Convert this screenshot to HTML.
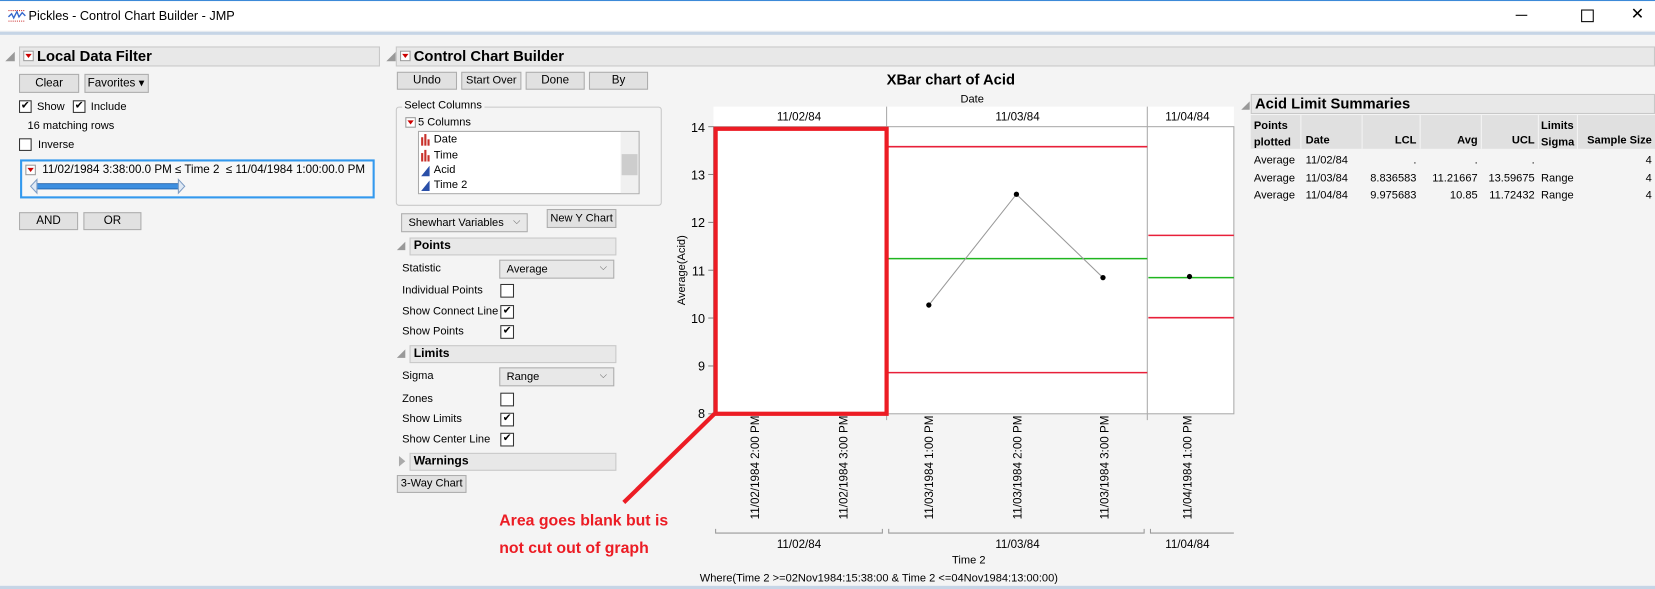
<!DOCTYPE html>
<html><head><meta charset="utf-8"><style>
html,body{margin:0;padding:0;width:1655px;height:589px;overflow:hidden;background:#f4f4f4}
#w{position:absolute;left:0;top:0;width:1568px;height:558px;transform:scale(1.05548,1.05556);transform-origin:0 0;font-family:"Liberation Sans",sans-serif;font-size:10.5px;color:#000;background:#f4f4f4}
.a{position:absolute;white-space:nowrap}
svg{overflow:visible}
.btn{position:absolute;background:#e1e1e1;border:1px solid #adadad;box-sizing:border-box;text-align:center;font-size:11px;white-space:nowrap;overflow:hidden}
.hdr{position:absolute;background:#e8e8e8;border:1px solid #c8c8c8;box-sizing:border-box;font-weight:bold;font-size:14px;padding-left:16px;line-height:16px}
.hdr2{position:absolute;background:#e8e8e8;border:1px solid #c8c8c8;box-sizing:border-box;font-weight:bold;font-size:11.5px;padding-left:3px;line-height:15px}
.dd{position:absolute;width:10px;height:10px;background:#fff;border:1px solid #999;box-sizing:border-box}
.dd:after{content:"";position:absolute;left:1px;top:2px;border-left:3px solid transparent;border-right:3px solid transparent;border-top:4px solid #c00}
.cb{position:absolute;width:12px;height:12px;background:#fff;border:1px solid #333;box-sizing:border-box;font-size:10px;line-height:10px;text-align:center}
.tri{position:absolute;width:0;height:0;border-left:9px solid transparent;border-bottom:9px solid #999}
.sel{position:absolute;background:#e8e8e8;border:1px solid #adadad;box-sizing:border-box;font-size:10.5px;padding-left:6px;line-height:16px;white-space:nowrap}
.sel:after{content:"\2335";position:absolute;right:6px;top:-2px;font-size:9px;color:#666}
.vt{position:absolute;transform:rotate(-90deg);transform-origin:0 0;font-size:11px;white-space:nowrap}
.r{text-align:right}
</style></head><body><div id="w">
<div class="a" style="left:0;top:0;width:1568px;height:29px;background:#fff;border-top:1px solid #3c8ad8;box-sizing:border-box"></div>
<svg class="a" style="left:7px;top:8px" width="18" height="14"><polyline points="1,8 4,5 6,9 9,3 11,8 14,4 17,7" fill="none" stroke="#3366cc" stroke-width="1.3"/><line x1="1" y1="12" x2="17" y2="12" stroke="#c33" stroke-dasharray="1,1"/><line x1="1" y1="2" x2="17" y2="2" stroke="#c33" stroke-dasharray="1,1"/></svg>
<div class="a" style="left:27px;top:8px;font-size:12px">Pickles - Control Chart Builder - JMP</div>
<div class="a" style="left:1436px;top:14px;width:11px;height:1px;background:#000"></div>
<div class="a" style="left:1498px;top:9px;width:10px;height:10px;border:1px solid #000"></div>
<div class="a" style="left:1545px;top:4px;font-size:15px">✕</div>
<div class="a" style="left:0;top:30px;width:1568px;height:3px;background:#c6d5e6"></div>

<div class="tri" style="left:5px;top:49px"></div>
<div class="hdr" style="left:18px;top:44px;width:342px;height:19px">Local Data Filter</div>
<div class="dd" style="left:22px;top:48px"></div>
<div class="btn" style="left:18px;top:70px;width:57px;height:18px;line-height:16px">Clear</div>
<div class="btn" style="left:80px;top:70px;width:61px;height:18px;line-height:16px;text-align:left;padding-left:2px">Favorites ▾</div>
<div class="cb" style="left:18px;top:95px">✔</div><div class="a" style="left:35px;top:95px">Show</div>
<div class="cb" style="left:69px;top:95px">✔</div><div class="a" style="left:86px;top:95px">Include</div>
<div class="a" style="left:26px;top:113px">16 matching rows</div>
<div class="cb" style="left:18px;top:131px"></div><div class="a" style="left:36px;top:131px">Inverse</div>
<div class="a" style="left:19px;top:151px;width:336px;height:37px;border:2px solid #3399ee;box-sizing:border-box;background:#f7f7f7"></div>
<div class="dd" style="left:24px;top:156px"></div>
<div class="a" style="left:40px;top:155px;font-size:11px">11/02/1984 3:38:00.0 PM ≤ Time 2 &nbsp;≤ 11/04/1984 1:00:00.0 PM</div>
<svg class="a" style="left:28px;top:170px" width="148" height="14"><rect x="6" y="4" width="136" height="5" fill="#3d8fe0" stroke="#1f5fa8" stroke-width=".8"/><path d="M7,0 L1,6.5 L7,13 Z M141,0 L147,6.5 L141,13 Z" fill="#dfe9f5" stroke="#7d9cc4"/></svg>
<div class="btn" style="left:18px;top:201px;width:56px;height:17px;line-height:15px">AND</div>
<div class="btn" style="left:79px;top:201px;width:55px;height:17px;line-height:15px">OR</div>

<div class="tri" style="left:366px;top:49px"></div>
<div class="hdr" style="left:375px;top:44px;width:1193px;height:19px">Control Chart Builder</div>
<div class="dd" style="left:379px;top:48px"></div>
<div class="btn" style="left:376px;top:68px;width:57px;height:17px;line-height:15px">Undo</div>
<div class="btn" style="left:437px;top:68px;width:57px;height:17px;line-height:15px;font-size:10.5px">Start Over</div>
<div class="btn" style="left:498px;top:68px;width:56px;height:17px;line-height:15px">Done</div>
<div class="btn" style="left:558px;top:68px;width:56px;height:17px;line-height:15px">By</div>
<div class="a" style="left:375px;top:101px;width:252px;height:94px;border:1px solid #c8c8c8;border-radius:3px;box-sizing:border-box"></div>
<div class="a" style="left:381px;top:94px;background:#f4f4f4;padding:0 2px">Select Columns</div>
<div class="dd" style="left:384px;top:111px"></div><div class="a" style="left:396px;top:110px">5 Columns</div>
<div class="a" style="left:396px;top:124px;width:210px;height:60px;background:#fff;border:1px solid #aaa;box-sizing:border-box"></div>
<div class="a" style="left:588px;top:125px;width:17px;height:58px;background:#f0f0f0"></div>
<div class="a" style="left:589px;top:146px;width:15px;height:20px;background:#cdcdcd"></div>
<svg class="a" style="left:399px;top:127px" width="10" height="60"><g fill="#c8302a"><rect x="0" y="3" width="2" height="8"/><rect x="3" y="0" width="2" height="11"/><rect x="6" y="5" width="2" height="6"/><rect x="0" y="18" width="2" height="8"/><rect x="3" y="15" width="2" height="11"/><rect x="6" y="20" width="2" height="6"/></g><g fill="#2a4fa8"><path d="M0,40 L8,30 L8,40Z M0,54 L8,44 L8,54Z"/></g></svg>
<div class="a" style="left:411px;top:126px">Date</div>
<div class="a" style="left:411px;top:141px">Time</div>
<div class="a" style="left:411px;top:155px">Acid</div>
<div class="a" style="left:411px;top:169px">Time 2</div>
<div class="sel" style="left:380px;top:202px;width:120px;height:18px">Shewhart Variables</div>
<div class="btn" style="left:518px;top:198px;width:66px;height:18px;line-height:16px;font-size:10.5px">New Y Chart</div>

<div class="tri" style="left:376px;top:229px;border-bottom-width:8px;border-left-width:8px"></div>
<div class="hdr2" style="left:388px;top:225px;width:196px;height:17px">Points</div>
<div class="a" style="left:381px;top:248px">Statistic</div><div class="sel" style="left:473px;top:246px;width:109px;height:18px">Average</div>
<div class="a" style="left:381px;top:269px">Individual Points</div><div class="cb" style="left:474px;top:269px;width:13px;height:13px"></div>
<div class="a" style="left:381px;top:289px">Show Connect Line</div><div class="cb" style="left:474px;top:289px;width:13px;height:13px">✔</div>
<div class="a" style="left:381px;top:308px">Show Points</div><div class="cb" style="left:474px;top:308px;width:13px;height:13px">✔</div>
<div class="tri" style="left:376px;top:331px;border-bottom-width:8px;border-left-width:8px"></div>
<div class="hdr2" style="left:388px;top:327px;width:196px;height:17px">Limits</div>
<div class="a" style="left:381px;top:350px">Sigma</div><div class="sel" style="left:473px;top:348px;width:109px;height:18px">Range</div>
<div class="a" style="left:381px;top:372px">Zones</div><div class="cb" style="left:474px;top:372px;width:13px;height:13px"></div>
<div class="a" style="left:381px;top:391px">Show Limits</div><div class="cb" style="left:474px;top:391px;width:13px;height:13px">✔</div>
<div class="a" style="left:381px;top:410px">Show Center Line</div><div class="cb" style="left:474px;top:410px;width:13px;height:13px">✔</div>
<div class="a" style="left:378px;top:432px;width:0;height:0;border-top:5px solid transparent;border-bottom:5px solid transparent;border-left:6px solid #aaa"></div>
<div class="hdr2" style="left:388px;top:429px;width:196px;height:17px">Warnings</div>
<div class="btn" style="left:376px;top:450px;width:66px;height:17px;line-height:15px;font-size:10.5px">3-Way Chart</div>

<div class="a" style="left:840px;top:67px;font-weight:bold;font-size:14px">XBar chart of Acid</div>
<div class="a" style="left:910px;top:88px">Date</div>
<div class="a" style="left:676px;top:101px;width:493px;height:19px;background:#fff"></div>
<div class="a" style="left:736px;top:105px;font-size:11px">11/02/84</div>
<div class="a" style="left:943px;top:105px;font-size:11px">11/03/84</div>
<div class="a" style="left:1104px;top:105px;font-size:11px">11/04/84</div>
<svg class="a" style="left:620px;top:95px" width="560" height="430">
<rect x="56" y="25" width="493" height="272" fill="#fff" stroke="#aaa"/>
<line x1="220" y1="6" x2="220" y2="303" stroke="#aaa"/>
<line x1="467" y1="6" x2="467" y2="303" stroke="#aaa"/>
<g stroke="#888"><line x1="51" y1="25" x2="56" y2="25"/><line x1="51" y1="70.3" x2="56" y2="70.3"/><line x1="51" y1="115.7" x2="56" y2="115.7"/><line x1="51" y1="161" x2="56" y2="161"/><line x1="51" y1="206.3" x2="56" y2="206.3"/><line x1="51" y1="251.7" x2="56" y2="251.7"/><line x1="51" y1="297" x2="56" y2="297"/></g>
<g font-family="Liberation Sans" font-size="12" text-anchor="end"><text x="48" y="30">14</text><text x="48" y="75">13</text><text x="48" y="120">12</text><text x="48" y="166">11</text><text x="48" y="211">10</text><text x="48" y="256">9</text><text x="48" y="301">8</text></g>
<text transform="translate(29,161) rotate(-90)" font-family="Liberation Sans" font-size="10.5" text-anchor="middle">Average(Acid)</text>
<line x1="221" y1="44" x2="467" y2="44" stroke="#e8203a" stroke-width="1.5"/>
<line x1="221" y1="150" x2="467" y2="150" stroke="#1fb51f" stroke-width="1.5"/>
<line x1="221" y1="258" x2="467" y2="258" stroke="#e8203a" stroke-width="1.5"/>
<line x1="468" y1="128" x2="549" y2="128" stroke="#e8203a" stroke-width="1.5"/>
<line x1="468" y1="168" x2="549" y2="168" stroke="#1fb51f" stroke-width="1.5"/>
<line x1="468" y1="206" x2="549" y2="206" stroke="#e8203a" stroke-width="1.5"/>
<polyline points="260,194 343,89 425,168" fill="none" stroke="#999"/>
<g fill="#000"><circle cx="260" cy="194" r="2.5"/><circle cx="343" cy="89" r="2.5"/><circle cx="425" cy="168" r="2.5"/><circle cx="507" cy="167" r="2.5"/></g>
<rect x="58" y="27" width="162" height="270" fill="none" stroke="#ec1c24" stroke-width="4"/>
<line x1="57" y1="297" x2="-29" y2="381" stroke="#ec1c24" stroke-width="4"/>
<g stroke="#999" fill="none"><path d="M58,406 V410 H216 V406"/><path d="M222,406 V410 H464 V406"/><path d="M470,406 V410 H549"/></g>
</svg>
<div class="vt" style="left:710px;top:492px">11/02/1984 2:00 PM</div>
<div class="vt" style="left:794px;top:492px">11/02/1984 3:00 PM</div>
<div class="vt" style="left:875px;top:492px">11/03/1984 1:00 PM</div>
<div class="vt" style="left:959px;top:492px">11/03/1984 2:00 PM</div>
<div class="vt" style="left:1041px;top:492px">11/03/1984 3:00 PM</div>
<div class="vt" style="left:1120px;top:492px">11/04/1984 1:00 PM</div>
<div class="a" style="left:736px;top:510px;font-size:11px">11/02/84</div>
<div class="a" style="left:943px;top:510px;font-size:11px">11/03/84</div>
<div class="a" style="left:1104px;top:510px;font-size:11px">11/04/84</div>
<div class="a" style="left:902px;top:525px">Time 2</div>
<div class="a" style="left:663px;top:542px">Where(Time 2 &gt;=02Nov1984:15:38:00 &amp; Time 2 &lt;=04Nov1984:13:00:00)</div>
<div class="a" style="left:473px;top:481px;color:#ec1c24;font-weight:bold;font-size:15px;line-height:26px">Area goes blank but is<br>not cut out of graph</div>

<div class="tri" style="left:1176px;top:96px;border-bottom-width:8px;border-left-width:8px"></div>
<div class="hdr" style="left:1185px;top:89px;width:383px;height:19px;padding-left:3px">Acid Limit Summaries</div>
<div class="a" style="left:1185px;top:109px;width:383px;height:32px;background:#e0e0e0"></div>
<div class="a" style="left:1232px;top:109px;width:1px;height:32px;background:#f4f4f4"></div>
<div class="a" style="left:1290px;top:109px;width:1px;height:32px;background:#f4f4f4"></div>
<div class="a" style="left:1345px;top:109px;width:1px;height:32px;background:#f4f4f4"></div>
<div class="a" style="left:1403px;top:109px;width:1px;height:32px;background:#f4f4f4"></div>
<div class="a" style="left:1457px;top:109px;width:1px;height:32px;background:#f4f4f4"></div>
<div class="a" style="left:1494px;top:109px;width:1px;height:32px;background:#f4f4f4"></div>
<div class="a" style="left:1188px;top:111px;font-weight:bold;line-height:16px">Points<br>plotted</div>
<div class="a" style="left:1237px;top:127px;font-weight:bold">Date</div>
<div class="a r" style="left:1290px;width:52px;top:127px;font-weight:bold">LCL</div>
<div class="a r" style="left:1345px;width:55px;top:127px;font-weight:bold">Avg</div>
<div class="a r" style="left:1403px;width:51px;top:127px;font-weight:bold">UCL</div>
<div class="a" style="left:1460px;top:111px;font-weight:bold;line-height:16px">Limits<br>Sigma</div>
<div class="a r" style="left:1494px;width:71px;top:127px;font-weight:bold">Sample Size</div>
<div class="a" style="left:1188px;top:144px;line-height:16.5px">Average<br>Average<br>Average</div>
<div class="a" style="left:1237px;top:144px;line-height:16.5px">11/02/84<br>11/03/84<br>11/04/84</div>
<div class="a r" style="left:1290px;width:52px;top:144px;line-height:16.5px">.<br>8.836583<br>9.975683</div>
<div class="a r" style="left:1345px;width:55px;top:144px;line-height:16.5px">.<br>11.21667<br>10.85</div>
<div class="a r" style="left:1403px;width:51px;top:144px;line-height:16.5px">.<br>13.59675<br>11.72432</div>
<div class="a" style="left:1460px;top:144px;line-height:16.5px">&nbsp;<br>Range<br>Range</div>
<div class="a r" style="left:1494px;width:71px;top:144px;line-height:16.5px">4<br>4<br>4</div>

<div class="a" style="left:0;top:555px;width:1568px;height:3px;background:#c6d5e6"></div>
</div></body></html>
